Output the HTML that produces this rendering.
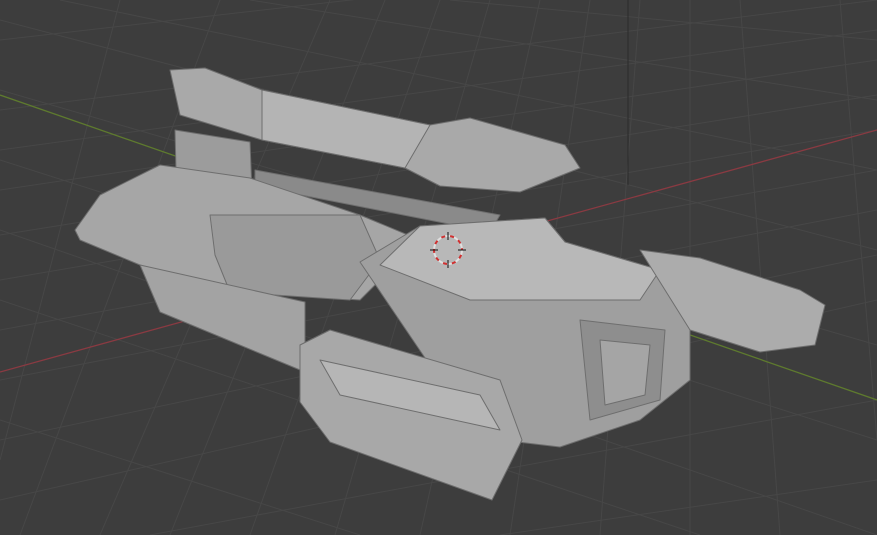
<!DOCTYPE html>
<html><head><meta charset="utf-8"><style>
html,body{margin:0;padding:0;background:#3d3d3d;}
svg{display:block}
</style></head><body>
<svg width="877" height="535" viewBox="0 0 877 535" xmlns="http://www.w3.org/2000/svg">
<rect width="877" height="535" fill="#3d3d3d"/>
<g stroke="#474747" stroke-width="1" fill="none">
<path d="M0,40 L877,-60 M0,110 L877,0 M0,190 L877,60 M0,280 L877,130 M0,380 L877,210 M0,500 L877,300 M150,535 L877,400 M500,535 L877,480 M0,150 L877,30 M0,235 L877,95 M0,330 L877,170 M0,440 L877,255"/>
<path d="M0,20 L877,250 M0,160 L877,440 M0,300 L700,535 M0,420 L360,535 M60,0 L877,170 M250,0 L877,100 M450,0 L877,40 M0,230 L877,535 M0,90 L877,345"/>
<path d="M100,535 L330,0 M20,535 L220,0 M250,535 L440,0 M420,535 L540,0 M600,535 L640,0 M780,535 L740,0 M877,440 L840,0 M0,460 L120,0 M170,535 L385,0 M335,535 L490,0 M510,535 L590,0 M690,535 L690,0"/>
</g>
<line x1="0" y1="372" x2="877" y2="130" stroke="#8a3a42" stroke-width="1.3"/>
<line x1="0" y1="95" x2="877" y2="400" stroke="#5e7a2e" stroke-width="1.3"/>
<line x1="628" y1="0" x2="628" y2="185" stroke="#2a2a2a" stroke-width="1"/>
<g stroke="#6e6e6e" stroke-width="1" stroke-linejoin="round">
<polygon points="170,70 205,68 262,90 430,125 470,118 565,145 580,168 520,192 440,186 405,168 262,140 180,115" fill="#a9a9a9"/>
<polygon points="262,90 430,125 405,168 262,140" fill="#b4b4b4"/>
<polygon points="175,130 250,142 252,192 176,170" fill="#9c9c9c"/>
<polygon points="255,170 500,215 490,232 255,186" fill="#8a8a8a"/>
<polygon points="75,230 100,195 160,165 250,178 360,215 420,240 360,300 230,292 140,265 80,240" fill="#a6a6a6"/>
<polygon points="210,215 360,215 380,260 350,300 230,292 215,255" fill="#9a9a9a"/>
<polygon points="360,262 420,226 545,218 565,242 660,270 690,300 690,380 640,420 560,447 500,440 440,380" fill="#9f9f9f"/>
<polygon points="420,226 545,218 565,242 660,270 640,300 470,300 380,265" fill="#b8b8b8"/>
<polygon points="580,320 665,330 660,400 590,420" fill="#8e8e8e"/>
<polygon points="600,340 650,345 645,395 605,405" fill="#a5a5a5"/>
<polygon points="140,265 305,302 305,372 160,312" fill="#a3a3a3"/>
<polygon points="640,250 700,258 800,290 825,305 815,345 760,352 690,330" fill="#acacac"/>
<polygon points="300,345 330,330 500,380 522,440 492,500 330,442 300,402" fill="#a8a8a8"/>
<polygon points="320,360 480,395 500,430 340,395" fill="#b6b6b6"/>
</g>
<g stroke="#e0e0e0" stroke-width="2" fill="none" stroke-dasharray="5 4">
<circle cx="448" cy="250" r="14"/>
</g>
<g stroke="#d03030" stroke-width="2" fill="none" stroke-dasharray="4 5" stroke-dashoffset="4">
<circle cx="448" cy="250" r="14"/>
</g>
<path d="M448,232 V240 M448,260 V268 M430,250 H438 M458,250 H466" stroke="#111" stroke-width="1"/>
</svg>
</body></html>
